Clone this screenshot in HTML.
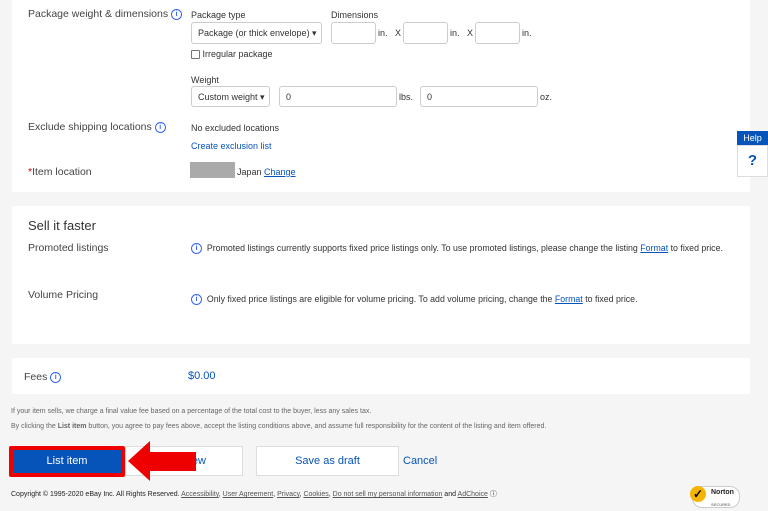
<!DOCTYPE html>
<html><head><style>
body{margin:0;width:768px;height:510px;background:#f5f5f5;font-family:"Liberation Sans",sans-serif;color:#333;position:relative;overflow:hidden}
.a{position:absolute;white-space:nowrap}
.p{position:absolute;background:#fff;left:12px;width:738px}
.l{font-size:10.5px;color:#444}
.s{font-size:9px}
.box{position:absolute;background:#fff;border:1px solid #ccc;border-radius:3px;box-sizing:border-box;font-size:9px;color:#333;padding-left:6px;line-height:20px}
.i{display:inline-block;width:9px;height:9px;border:1px solid #3665f3;border-radius:50%;font-size:7px;line-height:9px;text-align:center;color:#3665f3;font-weight:bold;vertical-align:middle}
.lk{color:#0654ba}
u{color:#0654ba}
</style></head><body>
<div class="p" style="top:0;height:192px"></div>
<div class="p" style="top:206px;height:138px"></div>
<div class="p" style="top:358px;height:36px"></div>

<div class="a l" style="left:28px;top:8px">Package weight &amp; dimensions <span class="i">i</span></div>
<div class="a s" style="left:191px;top:10px">Package type</div>
<div class="a s" style="left:331px;top:10px">Dimensions</div>
<div class="box" style="left:191px;top:22px;width:131px;height:22px">Package (or thick envelope) ▾</div>
<div class="box" style="left:331px;top:22px;width:45px;height:22px"></div>
<div class="a s" style="left:378px;top:28px">in. &nbsp; X</div>
<div class="box" style="left:403px;top:22px;width:45px;height:22px"></div>
<div class="a s" style="left:450px;top:28px">in. &nbsp; X</div>
<div class="box" style="left:475px;top:22px;width:45px;height:22px"></div>
<div class="a s" style="left:522px;top:28px">in.</div>
<div class="a s" style="left:191px;top:49px"><span style="display:inline-block;width:7px;height:7px;border:1px solid #777;border-radius:1px;vertical-align:middle"></span> Irregular package</div>
<div class="a s" style="left:191px;top:75px">Weight</div>
<div class="box" style="left:191px;top:86px;width:79px;height:21px">Custom weight ▾</div>
<div class="box" style="left:279px;top:86px;width:118px;height:21px">0</div>
<div class="a s" style="left:399px;top:92px">lbs.</div>
<div class="box" style="left:420px;top:86px;width:118px;height:21px">0</div>
<div class="a s" style="left:540px;top:92px">oz.</div>

<div class="a l" style="left:28px;top:121px">Exclude shipping locations <span class="i">i</span></div>
<div class="a s" style="left:191px;top:123px">No excluded locations</div>
<div class="a s lk" style="left:191px;top:141px">Create exclusion list</div>
<div class="a l" style="left:28px;top:166px"><span style="color:#c00">*</span>Item location</div>
<div class="a" style="left:190px;top:162px;width:45px;height:16px;background:#aaa"></div>
<div class="a s" style="left:237px;top:167px">Japan <u>Change</u></div>

<div class="a" style="left:737px;top:131px;width:31px;height:14px;background:#0654ba;color:#fff;font-size:9px;text-align:center;line-height:14px">Help</div>
<div class="a" style="left:737px;top:145px;width:31px;height:32px;background:#fff;border:1px solid #ddd;box-sizing:border-box;color:#0654ba;font-size:15px;font-weight:bold;text-align:center;line-height:30px">?</div>

<div class="a" style="left:28px;top:218px;font-size:13px">Sell it faster</div>
<div class="a l" style="left:28px;top:242px">Promoted listings</div>
<div class="a" style="left:191px;top:243px;font-size:8.8px"><span class="i">i</span> &nbsp;Promoted listings currently supports fixed price listings only. To use promoted listings, please change the listing <u>Format</u> to fixed price.</div>
<div class="a l" style="left:28px;top:289px">Volume Pricing</div>
<div class="a" style="left:191px;top:294px;font-size:8.8px"><span class="i">i</span> &nbsp;Only fixed price listings are eligible for volume pricing. To add volume pricing, change the <u>Format</u> to fixed price.</div>

<div class="a l" style="left:24px;top:371px">Fees <span class="i">i</span></div>
<div class="a" style="left:188px;top:370px;font-size:11px;color:#0654ba">$0.00</div>

<div class="a" style="left:11px;top:408px;font-size:7px;color:#666">If your item sells, we charge a final value fee based on a percentage of the total cost to the buyer, less any sales tax.</div>
<div class="a" style="left:11px;top:423px;font-size:7px;color:#666">By clicking the <b>List item</b> button, you agree to pay fees above, accept the listing conditions above, and assume full responsibility for the content of the listing and item offered.</div>

<div class="a" style="left:125px;top:446px;width:118px;height:30px;background:#fff;border:1px solid #ddd;box-sizing:border-box;font-size:11px;color:#0654ba;line-height:28px;text-align:right;padding-right:36px">iew</div>
<div class="a" style="left:256px;top:446px;width:143px;height:30px;background:#fff;border:1px solid #ddd;box-sizing:border-box;font-size:11px;color:#0654ba;line-height:28px;text-align:center">Save as draft</div>
<div class="a" style="left:403px;top:455px;font-size:11px;color:#0654ba">Cancel</div>
<div class="a" style="left:9px;top:446px;width:116px;height:31px;background:#e00;border-radius:2px"></div>
<div class="a" style="left:13px;top:450px;width:108px;height:23px;background:#0654ba;color:#fff;font-size:11px;line-height:23px;text-align:center">List item</div>
<svg class="a" style="left:128px;top:441px" width="68" height="40"><polygon points="0,20 22,0 22,11 68,11 68,30 22,30 22,40" fill="#e00"/></svg>

<div class="a" style="left:11px;top:489px;font-size:7px;color:#222">Copyright © 1995-2020 eBay Inc. All Rights Reserved. <u style="color:#555">Accessibility</u>, <u style="color:#555">User Agreement</u>, <u style="color:#555">Privacy</u>, <u style="color:#555">Cookies</u>, <u style="color:#555">Do not sell my personal information</u> and <u style="color:#555">AdChoice</u> ⓘ</div>
<div class="a" style="left:692px;top:486px;width:48px;height:22px;border:1px solid #ccc;border-radius:10px;background:#fff;font-size:7px;font-weight:bold;color:#222;padding-left:18px;box-sizing:border-box;line-height:12px">Norton<br><span style="font-size:4px;color:#888">SECURED</span></div>
<div class="a" style="left:690px;top:486px;width:16px;height:16px;border-radius:50%;background:#f5b400;color:#000;font-size:12px;font-weight:bold;text-align:center;line-height:16px">✓</div>
</body></html>
